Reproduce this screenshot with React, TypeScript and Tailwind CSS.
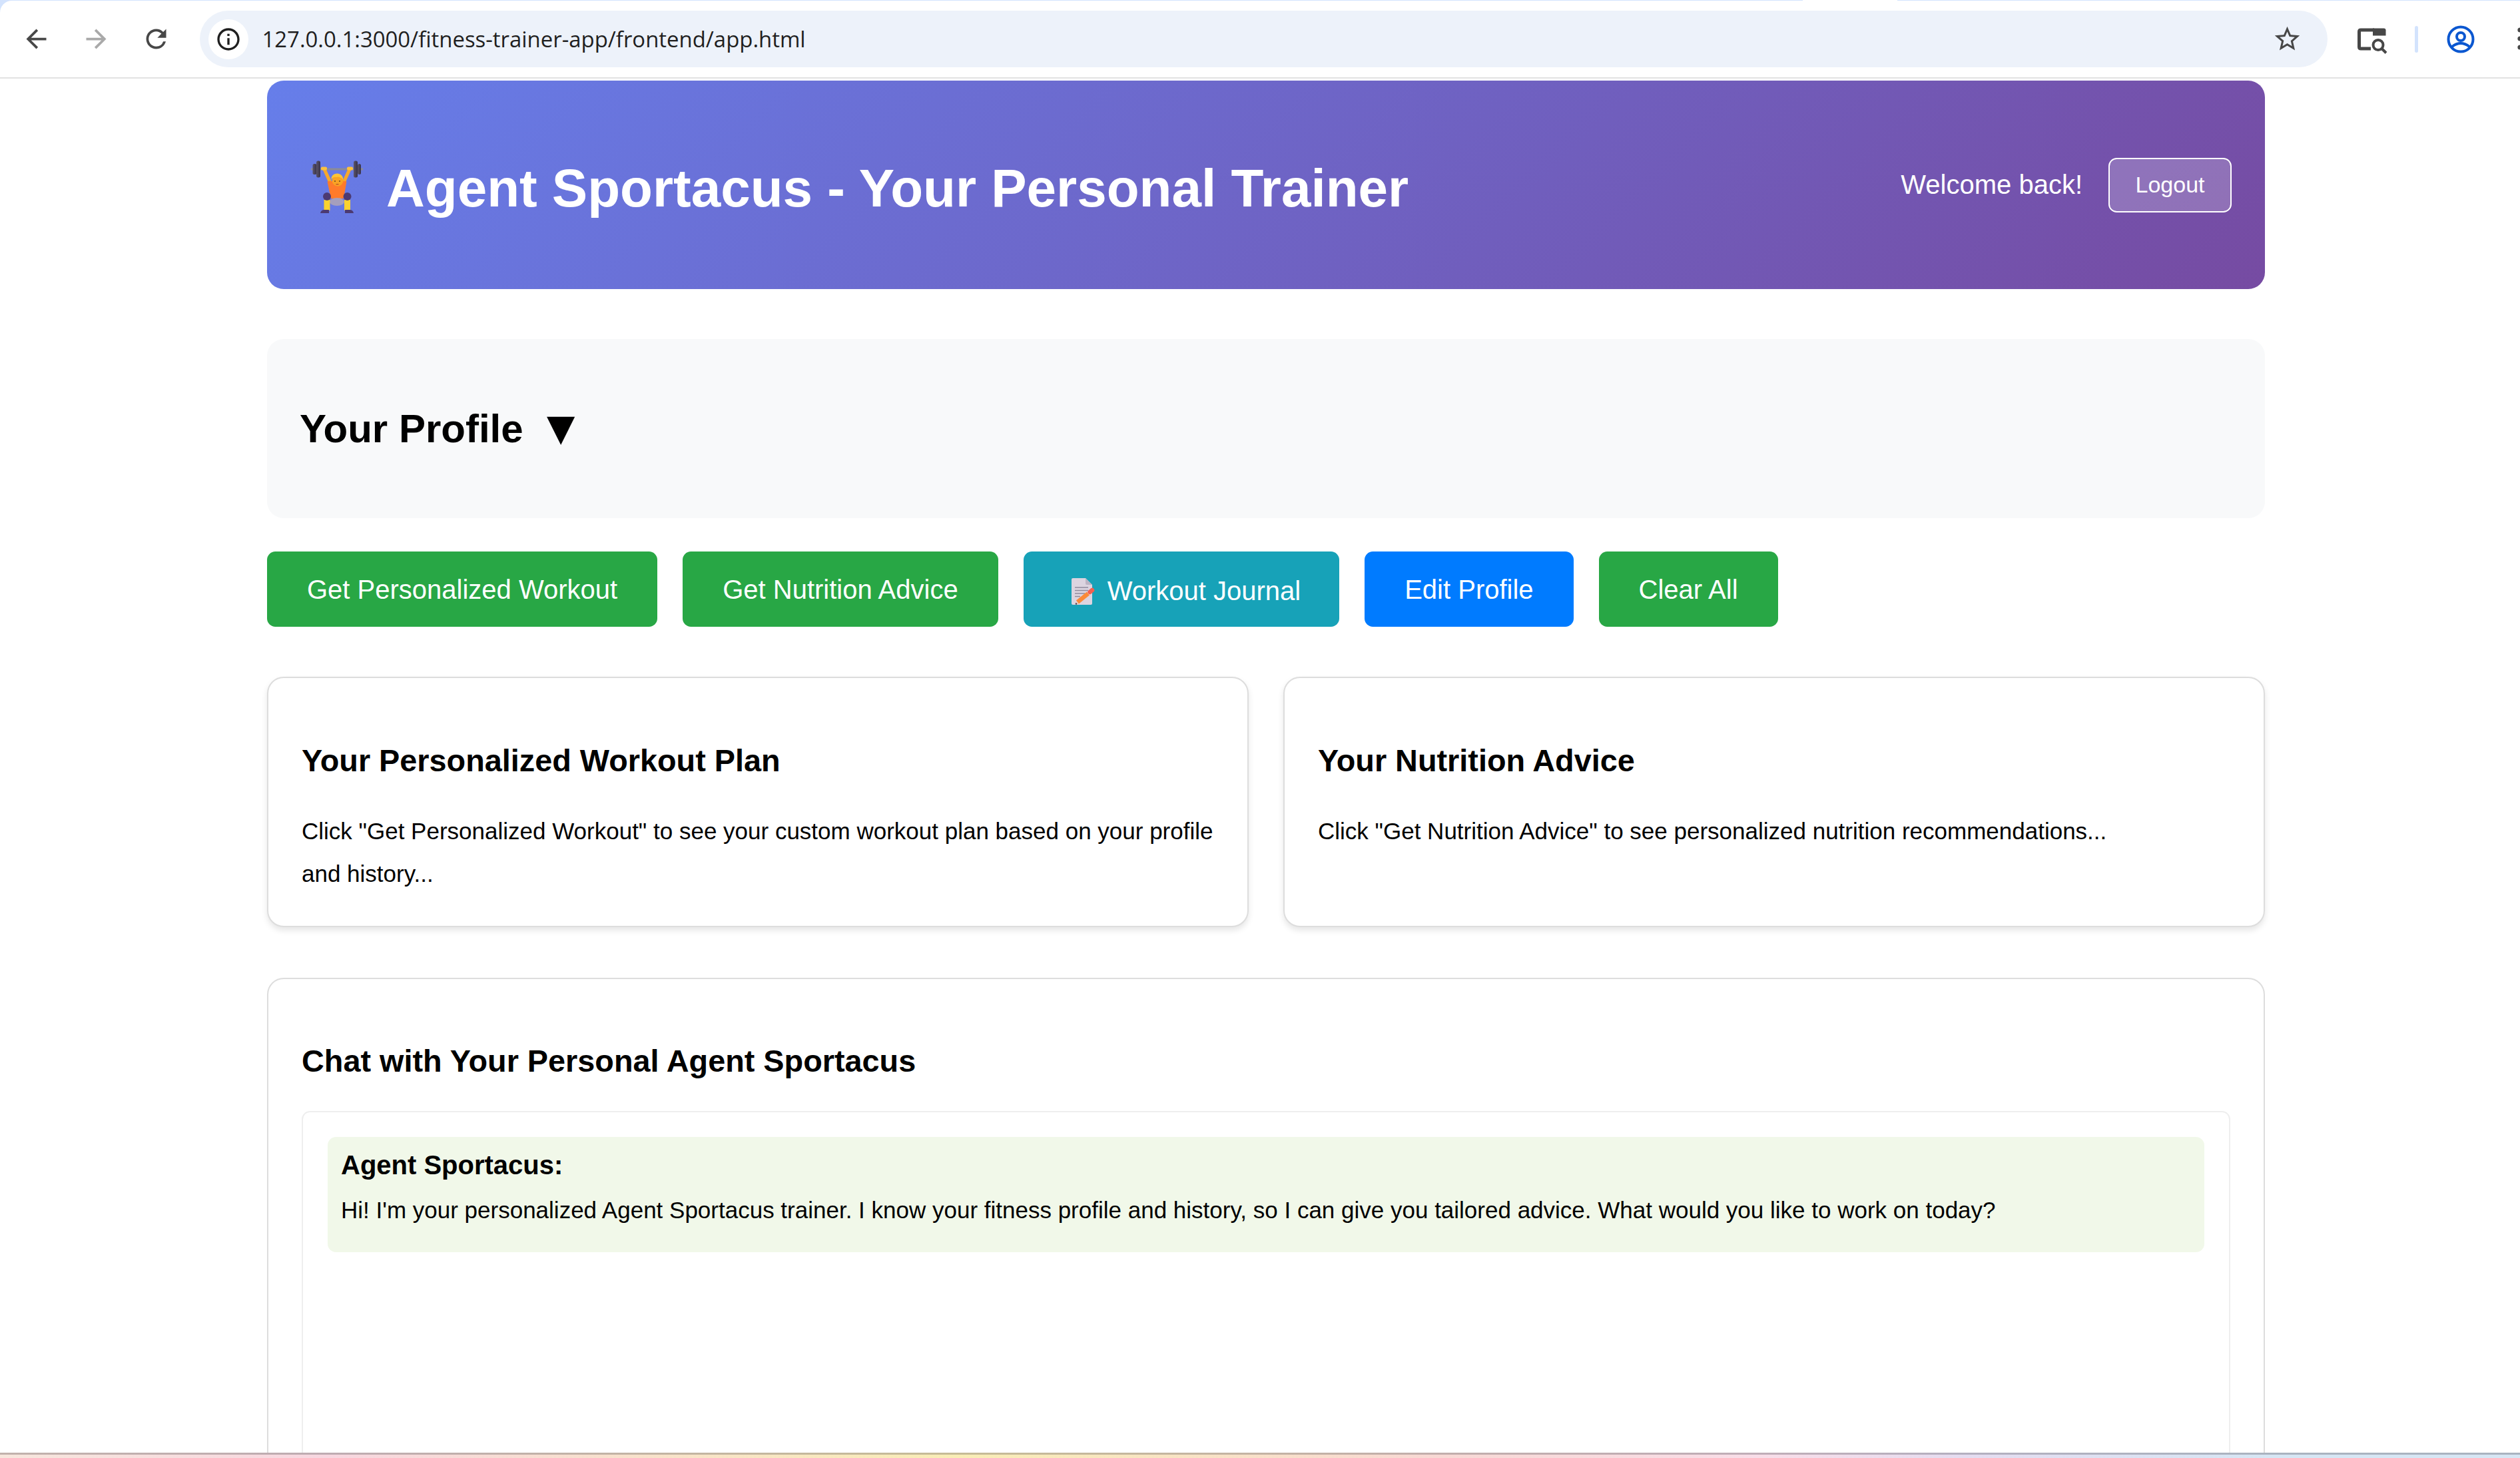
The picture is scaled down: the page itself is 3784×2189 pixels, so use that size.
import React from "react";

const sans = "font-['Liberation_Sans',Arial,sans-serif]";

function Lifter() {
  return (
    <svg width="110" height="100" viewBox="0 0 110 100" className="shrink-0">
      <defs>
        <linearGradient id="plate" x1="0" x2="1" y1="0" y2="0">
          <stop offset="0" stopColor="#5b5468" />
          <stop offset="1" stopColor="#37324a" />
        </linearGradient>
      </defs>
      <rect x="17" y="24.5" width="78" height="3" fill="#8c8c94" />
      <rect x="19.5" y="18" width="6" height="16" rx="2.5" fill="url(#plate)" />
      <rect x="25" y="13.5" width="6" height="25" rx="2.5" fill="url(#plate)" />
      <rect x="81" y="13.5" width="6" height="25" rx="2.5" fill="url(#plate)" />
      <rect x="87" y="18" width="5" height="16" rx="2.5" fill="url(#plate)" />
      <path d="M37 26 L46 46" stroke="#f7a82a" strokeWidth="5" strokeLinecap="round" />
      <path d="M75 26 L66 46" stroke="#f7a82a" strokeWidth="5" strokeLinecap="round" />
      <rect x="32" y="22.5" width="9" height="5" rx="2" fill="#fdc13c" />
      <rect x="71" y="22.5" width="9" height="5" rx="2" fill="#fdc13c" />
      <path d="M43 44 L69 44 Q71 44 70 47 L66 70 L47 70 L42 47 Q41 44 43 44 Z" fill="#ff7b2b" />
      <ellipse cx="56" cy="75" rx="11" ry="6" fill="#a59fbd" />
      <rect x="36.5" y="72" width="9" height="16" fill="#fbd22f" />
      <rect x="67" y="72" width="9" height="16" fill="#fbd22f" />
      <circle cx="41" cy="67" r="6" fill="#4c3a72" />
      <circle cx="71.5" cy="67" r="6" fill="#4c3a72" />
      <path d="M31 92 Q32 87 37 87 L44 87 L44 92 Z" fill="#4c3a72" />
      <path d="M68 87 L75 87 Q80 87 81 92 L68 92 Z" fill="#4c3a72" />
      <circle cx="57" cy="43" r="8.5" fill="#f9a324" />
      <path d="M47.5 42 Q47 33 56 32.5 Q65 33 65.5 42 Q60 36 55 38 Q50 37 47.5 42 Z" fill="#fdc436" />
      <circle cx="53" cy="44" r="0.9" fill="#5c3a1e" />
      <circle cx="60" cy="44" r="0.9" fill="#5c3a1e" />
      <rect x="54.5" y="48" width="4" height="1.2" fill="#b8452a" />
    </svg>
  );
}

function Memo() {
  return (
    <svg width="60" height="60" viewBox="0 0 60 60" className="shrink-0 mt-[12px]">
      <path d="M15 7 L34 7 L44 17 L44 45 Q44 47 42 47 L15 47 Q13 47 13 45 L13 9 Q13 7 15 7 Z" fill="#dcd4e0" />
      <path d="M34 7 L44 17 L36 17 Q34 17 34 15 Z" fill="#bcb4c4" />
      <path d="M18 21 H38 M18 25.5 H38 M18 30 H33 M18 34.5 H26" stroke="#908a9c" strokeWidth="1.4" />
      <path d="M22 43 L38 30" stroke="#fb8a38" strokeWidth="6.5" />
      <path d="M38 30 L40.5 28" stroke="#e8dfe8" strokeWidth="6.5" />
      <path d="M40.5 28 L44 25" stroke="#f4604f" strokeWidth="6.5" strokeLinecap="round" />
      <path d="M18.5 43 L19.5 47 L24 45.5 Z" fill="#f2c9a0" />
      <circle cx="20" cy="45.5" r="1.2" fill="#4c3a5c" />
    </svg>
  );
}

function Chrome() {
  return (
    <div className="relative bg-[#d3e3fd] pt-px h-[118px] shrink-0">
      <div className="absolute left-[2707px] top-0 w-[142px] h-px bg-white" />
      <div className="flex items-center h-[115px] bg-white rounded-tl-[18px] pl-[32px] overflow-hidden">
        <svg width="45" height="45" viewBox="0 0 24 24" fill="#474747" className="shrink-0">
          <path d="M20 11H7.83l5.59-5.59L12 4l-8 8 8 8 1.41-1.41L7.83 13H20v-2z" />
        </svg>
        <svg width="45" height="45" viewBox="0 0 24 24" fill="#a9a9a9" className="shrink-0 ml-[45px]">
          <path d="M12 4l-1.41 1.41L16.17 11H4v2h12.17l-5.58 5.59L12 20l8-8z" />
        </svg>
        <svg width="45" height="45" viewBox="0 0 24 24" fill="#474747" className="shrink-0 ml-[45px]">
          <path d="M17.65 6.35A7.958 7.958 0 0 0 12 4c-4.42 0-7.99 3.58-7.99 8s3.57 8 7.99 8c3.73 0 6.84-2.55 7.73-6h-2.08A5.99 5.99 0 0 1 12 18c-3.31 0-6-2.69-6-6s2.69-6 6-6c1.66 0 3.14.69 4.22 1.78L13 11h7V4l-2.35 2.35z" />
        </svg>
        <div className="ml-[42.5px] w-[3195px] h-[85px] shrink-0 rounded-full bg-[#edf2fa] flex items-center pl-[13px] pr-[13px]">
          <div className="w-[60px] h-[60px] rounded-full bg-white flex items-center justify-center shrink-0">
            <svg width="40" height="40" viewBox="0 0 24 24" fill="#1f1f1f">
              <path d="M11 7h2v2h-2zm0 4h2v6h-2zm1-9C6.48 2 2 6.48 2 12s4.48 10 10 10 10-4.48 10-10S17.52 2 12 2zm0 18c-4.41 0-8-3.59-8-8s3.59-8 8-8 8 3.59 8 8-3.59 8-8 8z" />
            </svg>
          </div>
          <span className="ml-[21px] text-[32.9px] text-[#1f1f1f] font-['Open_Sans',sans-serif] whitespace-nowrap">
            127.0.0.1:3000/fitness-trainer-app/frontend/app.html
          </span>
          <svg width="45" height="45" viewBox="0 0 24 24" fill="#474747" className="shrink-0 ml-auto mr-[25px]">
            <path d="M22 9.24l-7.19-.62L12 2 9.19 8.63 2 9.24l5.46 4.73L5.82 21 12 17.27 18.18 21l-1.63-7.03L22 9.24zM12 15.4l-3.76 2.27 1-4.28-3.32-2.88 4.38-.38L12 6.1l1.71 4.04 4.38.38-3.32 2.88 1 4.28L12 15.4z" />
          </svg>
        </div>
        <svg width="48" height="44" viewBox="0 0 48 44" className="shrink-0 ml-[44px]" fill="none">
          <path d="M26 8 H6 Q3.5 8 3.5 10.5 V33.5 Q3.5 36 6 36 H21" stroke="#474747" strokeWidth="5" />
          <path d="M24 5.5 H40.5 Q43.5 5.5 43.5 8.5 V16.5 H24 Z" fill="#474747" />
          <circle cx="32" cy="30.5" r="7.5" stroke="#474747" strokeWidth="4" />
          <path d="M37.5 36 L44 42.5" stroke="#474747" strokeWidth="4" />
        </svg>
        <div className="ml-[39px] w-[5px] h-[40px] rounded-full bg-[#d3e3fd] shrink-0" />
        <svg width="44" height="44" viewBox="0 0 44 44" fill="none" className="shrink-0 ml-[42px]">
          <circle cx="22" cy="22" r="18.5" stroke="#0b57d0" strokeWidth="4" />
          <circle cx="22" cy="18" r="6" stroke="#0b57d0" strokeWidth="4" />
          <path d="M9 33 Q22 23 35 33" stroke="#0b57d0" strokeWidth="4" />
        </svg>
        <svg width="10" height="40" viewBox="0 0 10 40" fill="#474747" className="shrink-0 ml-[62px]">
          <circle cx="5" cy="6" r="3.6" />
          <circle cx="5" cy="19" r="3.6" />
          <circle cx="5" cy="32" r="3.6" />
        </svg>
      </div>
      <div className="h-[2px] bg-[#e2e2e2]" />
    </div>
  );
}

function ActionButton({ className, children }: { className: string; children: React.ReactNode }) {
  return (
    <button className={`h-[113px] px-[60px] rounded-[12.5px] text-white text-[40px] flex items-center shrink-0 ${className}`}>
      {children}
    </button>
  );
}

function InfoCard({ title, lines }: { title: string; lines: string }) {
  return (
    <div className="h-[376px] border-2 border-[#dddddd] rounded-[25px] bg-white shadow-[0_5px_10px_rgba(0,0,0,0.1)] px-[50px] pt-[98px]">
      <h3 className="text-[46.8px] leading-[52px] font-bold text-black">{title}</h3>
      <p className="mt-[48px] text-[35px] leading-[64px] text-black">{lines}</p>
    </div>
  );
}

export default function App() {
  return (
    <div className={`h-[2189px] w-full overflow-hidden flex flex-col bg-white ${sans}`}>
      <Chrome />
      <main className="flex-1 min-h-0 overflow-hidden pl-[401px]">
        <div className="w-[3000px]">
          <header className="mt-[3px] h-[313px] rounded-[25px] bg-[linear-gradient(135deg,#667eea_0%,#764ba2_100%)] flex items-center justify-between pl-[49px] pr-[50px] text-white">
            <h1 className="flex items-center text-[80px] font-bold whitespace-nowrap">
              <Lifter />
              <span className="ml-[20px] pt-[10px]">Agent Sportacus - Your Personal Trainer</span>
            </h1>
            <div className="flex items-center gap-[39px]">
              <span className="text-[40px] pb-[1px]">Welcome back!</span>
              <button className="w-[185px] h-[82px] rounded-[12.5px] border-2 border-white bg-white/20 text-white text-[34px]">
                Logout
              </button>
            </div>
          </header>

          <section className="mt-[75px] h-[269px] rounded-[25px] bg-[#f8f9fa] flex items-center pl-[49px]">
            <h2 className="text-[60px] font-bold text-black whitespace-nowrap flex items-center">
              Your Profile
              <span className="ml-[21px] mb-[4px] text-[72px] leading-none">▼</span>
            </h2>
          </section>

          <div className="mt-[50px] flex gap-[38px]">
            <ActionButton className="bg-[#28a745]">Get Personalized Workout</ActionButton>
            <ActionButton className="bg-[#28a745]">Get Nutrition Advice</ActionButton>
            <ActionButton className="bg-[#17a2b8] !pl-[59px] !pr-[58px]">
              <Memo />
              <span className="pt-[5px] ml-[7px]">Workout Journal</span>
            </ActionButton>
            <ActionButton className="bg-[#007bff]">Edit Profile</ActionButton>
            <ActionButton className="bg-[#28a745]">Clear All</ActionButton>
          </div>

          <div className="mt-[75px] grid grid-cols-2 gap-[52px]">
            <InfoCard
              title="Your Personalized Workout Plan"
              lines={'Click "Get Personalized Workout" to see your custom workout plan based on your profile and history...'}
            />
            <InfoCard
              title="Your Nutrition Advice"
              lines={'Click "Get Nutrition Advice" to see personalized nutrition recommendations...'}
            />
          </div>

          <section className="mt-[76px] h-[1000px] border-2 border-[#dddddd] rounded-[25px] bg-white px-[50px] pt-[97px]">
            <h3 className="text-[46.8px] leading-[52px] font-bold text-black">Chat with Your Personal Agent Sportacus</h3>
            <div className="mt-[49px] h-[800px] border-2 border-[#eeeeee] rounded-[12.5px] p-[37px]">
              <div className="h-[173px] rounded-[12.5px] bg-[#f1f8e9] pl-[20px] pr-[19px] pt-[19px]">
                <div className="text-[40px] leading-[46px] font-bold text-black">Agent Sportacus:</div>
                <div className="mt-[21px] text-[35px] leading-[48px] text-black whitespace-nowrap">
                  Hi! I'm your personalized Agent Sportacus trainer. I know your fitness profile and history, so I can give you tailored advice. What would you like to work on today?
                </div>
              </div>
            </div>
          </section>
        </div>
      </main>
      <div className="h-[3px] shrink-0 bg-[linear-gradient(90deg,#c2b2ac_0%,#bfacb2_13%,#c6bc96_38%,#c2aeac_57%,#c0aeb8_70%,#b4b0c0_78%,#aab4c0_90%,#aab4c0_100%)]" />
      <div className="h-[5px] shrink-0 bg-[linear-gradient(90deg,#f7e6dc_0%,#f7d6e0_13%,#f9edb5_38%,#f8d8d4_57%,#f8dde8_70%,#e4dcf0_78%,#d6e6f4_90%,#d6e6f4_100%)]" />
    </div>
  );
}
